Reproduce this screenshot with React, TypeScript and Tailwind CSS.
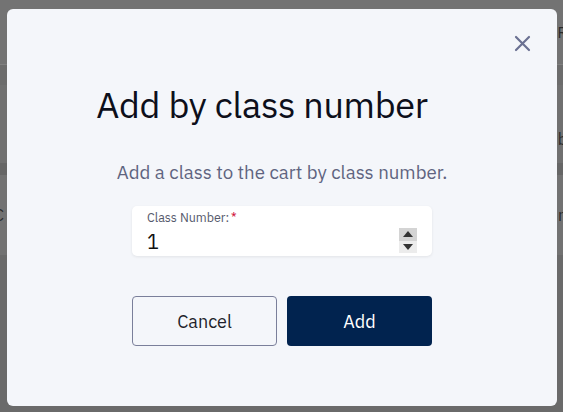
import React from "react";

export default function App() {
  return (
    <div className="relative w-[563px] h-[412px] overflow-hidden bg-[#6e6e6e]" style={{ fontFamily: '"IBM Plex Sans", "Noto Sans", sans-serif' }}>
      {/* background page behind overlay */}
      <div className="flex flex-col w-full">
        <div className="h-[65px] bg-[#737373] border-b border-[#808080] flex items-start justify-end">
          <span className="mt-[22px] mr-[-4px] text-[15px] text-[#2a2a2a]">R</span>
        </div>
        <div className="h-[20px] bg-[#6c6c6c]" />
        <div className="h-[78px] bg-[#707070] flex items-center justify-end">
          <span className="mt-[30px] mr-[-4px] text-[16px] text-[#2a2a2a]">b</span>
        </div>
        <div className="h-[12px] bg-[#666666]" />
        <div className="h-[80px] bg-[#727272] flex items-center justify-between">
          <span className="ml-[-6px] text-[16px] text-[#2a2a2a]">C</span>
          <span className="mr-[-4px] text-[16px] text-[#2a2a2a]">n</span>
        </div>
        <div className="h-[157px] bg-[#6a6a6a]" />
      </div>

      {/* modal */}
      <div className="absolute left-[7px] top-[9px] w-[550px] h-[397px] rounded-[6px] bg-[#f4f6fa] flex flex-col items-center">
        <button className="absolute right-[26px] top-[25px] w-[18px] h-[18px] flex items-center justify-center text-[#6b7192]">
          <svg width="17" height="17" viewBox="0 0 17 17" fill="none" stroke="currentColor" strokeWidth="2.2" strokeLinecap="round">
            <path d="M2 2 L15 15 M15 2 L2 15" />
          </svg>
        </button>
        <h1 className="mt-[73px] pr-[40px] text-[36px] leading-[46px] font-normal text-[#0d0f1a] tracking-[-0.3px]">Add by class number</h1>
        <p className="mt-[32px] text-[18.7px] leading-[24px] text-[#5f6480]">Add a class to the cart by class number.</p>
        <div className="mt-[22px] w-[300px] h-[50px] bg-white rounded-[5px] shadow-[0_1px_3px_rgba(0,0,0,0.08)] relative pl-[15px] pt-[3px]">
          <div className="text-[12.5px] leading-[16px] text-[#55596b]">
            Class Number:<span className="text-[#d0103a] ml-[2px]">*</span>
          </div>
          <div className="text-[20px] leading-[26px] text-[#111111] mt-[4px]">1</div>
          <div className="absolute right-[15px] top-[22px] w-[18px] h-[25px] flex flex-col">
            <div className="flex-1 bg-[#d4d4d4] flex items-center justify-center">
              <svg width="10" height="6" viewBox="0 0 10 6"><path d="M5 0 L10 6 L0 6 Z" fill="#333" /></svg>
            </div>
            <div className="flex-1 bg-[#ececec] flex items-center justify-center">
              <svg width="10" height="6" viewBox="0 0 10 6"><path d="M0 0 L10 0 L5 6 Z" fill="#333" /></svg>
            </div>
          </div>
        </div>
        <div className="mt-[40px] flex gap-[10px]">
          <button className="w-[145px] h-[50px] rounded-[4px] border border-[#7a7f9a] bg-transparent text-[18px] text-[#1e1f2b]">Cancel</button>
          <button className="w-[145px] h-[50px] rounded-[4px] bg-[#01234f] text-[18px] text-white">Add</button>
        </div>
      </div>
    </div>
  );
}
